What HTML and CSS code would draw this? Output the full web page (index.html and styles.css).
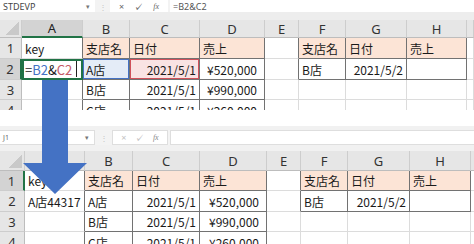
FILE: index.html
```html
<!DOCTYPE html>
<html lang="ja">
<head>
<meta charset="utf-8">
<link rel="stylesheet" href="styles.css">
</head>
<body>
<div class="page">
  <div class="sheet sheet-top">
    <div class="fbar">
      <div class="namebox"><span>STDEVP</span><span class="dd">▾</span></div>
      <div class="sep">⋮</div>
      <div class="fbtns"><span>×</span><span>✓</span><span class="fx">fx</span></div>
      <div class="finput">=B2&amp;C2</div>
    </div>
    <div class="band"></div>
    <div class="grid grid-top">
      <div class="corner"><div class="tri"></div></div>
      <div class="h sel">A</div><div class="h">B</div><div class="h">C</div><div class="h">D</div><div class="h">E</div><div class="h">F</div><div class="h">G</div><div class="h">H</div><div class="h"></div>

      <div class="rh">1</div>
      <div class="c tl">key</div>
      <div class="c t th">支店名</div><div class="c t th">日付</div><div class="c t th">売上</div>
      <div class="c tl"></div>
      <div class="c t th">支店名</div><div class="c t th">日付</div><div class="c t th">売上</div>
      <div class="c"></div>

      <div class="rh sel">2</div>
      <div class="c tl active"><span>=</span><span class="fb">B2</span><span>&amp;</span><span class="fc">C2</span><span class="caret"></span></div>
      <div class="c t refb">A店</div>
      <div class="c t r refc">2021/5/1</div>
      <div class="c t r cur">¥520,000</div>
      <div class="c tl"></div>
      <div class="c t">B店</div><div class="c t r">2021/5/2</div><div class="c t"></div>
      <div class="c"></div>

      <div class="rh">3</div>
      <div class="c tl"></div>
      <div class="c t">B店</div><div class="c t r">2021/5/1</div><div class="c t r cur">¥990,000</div>
      <div class="c"></div><div class="c"></div><div class="c"></div><div class="c"></div><div class="c"></div>

      <div class="rh">4</div>
      <div class="c tl"></div>
      <div class="c t">C店</div><div class="c t r">2021/5/1</div><div class="c t r cur">¥260,000</div>
      <div class="c"></div><div class="c"></div><div class="c"></div><div class="c"></div><div class="c"></div>
    </div>
  </div>

  <div class="sheet sheet-bottom">
    <div class="fbar">
      <div class="namebox"><span>J1</span><span class="dd">▾</span></div>
      <div class="sep">⋮</div>
      <div class="fbtns"><span>×</span><span>✓</span><span class="fx">fx</span></div>
      <div class="finput"></div>
    </div>
    <div class="band"></div>
    <div class="grid grid-bottom">
      <div class="corner"><div class="tri"></div></div>
      <div class="h">A</div><div class="h">B</div><div class="h">C</div><div class="h">D</div><div class="h">E</div><div class="h">F</div><div class="h">G</div><div class="h">H</div><div class="h"></div>

      <div class="rh sel">1</div>
      <div class="c tl">key</div>
      <div class="c t th">支店名</div><div class="c t th">日付</div><div class="c t th">売上</div>
      <div class="c tl"></div>
      <div class="c t th">支店名</div><div class="c t th">日付</div><div class="c t th">売上</div>
      <div class="c"></div>

      <div class="rh">2</div>
      <div class="c tl">A店44317</div>
      <div class="c t">A店</div>
      <div class="c t r">2021/5/1</div>
      <div class="c t r cur">¥520,000</div>
      <div class="c tl"></div>
      <div class="c t">B店</div><div class="c t r">2021/5/2</div><div class="c t"></div>
      <div class="c"></div>

      <div class="rh">3</div>
      <div class="c tl"></div>
      <div class="c t">B店</div><div class="c t r">2021/5/1</div><div class="c t r cur">¥990,000</div>
      <div class="c"></div><div class="c"></div><div class="c"></div><div class="c"></div><div class="c"></div>

      <div class="rh">4</div>
      <div class="c tl"></div>
      <div class="c t">C店</div><div class="c t r">2021/5/1</div><div class="c t r cur">¥260,000</div>
      <div class="c"></div><div class="c"></div><div class="c"></div><div class="c"></div><div class="c"></div>
    </div>
  </div>

  <svg class="arrow" width="474" height="244" viewBox="0 0 474 244">
    <polygon points="42,80 68,80 68,163 87,163 55,194 23,163 42,163" fill="#4472c4"/>
  </svg>
</div>
</body>
</html>
```

FILE: styles.css
```css
* { box-sizing: border-box; }
html, body { margin: 0; padding: 0; background: #fff; }
body { width: 474px; height: 244px; overflow: hidden; font-family: "Noto Sans CJK JP", "Noto Sans", sans-serif; }

.page { position: relative; width: 474px; height: 244px; }

.sheet { overflow: hidden; background: #fff; }
.sheet-top { height: 110px; margin-bottom: 16px; }
.sheet-bottom { height: 118px; background: #f1f1f1; padding-top: 4px; }

/* formula bar */
.fbar { display: flex; background: #f3f3f3; font-family: "Noto Sans", sans-serif; font-size: 9px; color: #444; }
.sheet-top .fbar { height: 12px; }
.sheet-bottom .fbar { height: 15px; }
.namebox { width: 95px; background: #fff; display: flex; align-items: center; justify-content: space-between; padding: 0 5px 0 3px; }
.sheet-bottom .namebox { font-size: 7px; color: #666; border: 1px solid #dedede; border-left: none; }
.dd { font-size: 7px; color: #777; }
.sep { width: 15px; display: flex; align-items: center; justify-content: center; color: #c4c4c4; font-size: 8px; }
.sheet-bottom .sep { width: 17px; }
.fbtns { width: 58px; background: #fff; display: flex; align-items: center; justify-content: space-around; padding: 0 4px; color: #666; font-size: 9px; margin-right: 2px; }
.sheet-bottom .fbtns { width: 56px; color: #c2c2c2; border: 1px solid #dedede; }
.fx { font-family: "Liberation Serif", serif; font-style: italic; font-size: 8px; }
.sheet-bottom .fx { color: #888; }
.finput { flex: 1; background: #fff; display: flex; align-items: center; padding-left: 3px; font-size: 9px; color: #555; }
.sheet-bottom .finput { border: 1px solid #dedede; border-right: none; }

.band { background: #ededed; }
.sheet-top .band { height: 8px; }
.sheet-bottom .band { height: 6px; background: #f1f1f1; }

/* grid */
.grid { display: grid; background: #fff; }
.grid-top { grid-template-columns: 22px 61px 47px 70px 65px 34px 47px 61px 60px 1fr; grid-template-rows: 18px 21px 21px 20px 21px; }
.grid-bottom { grid-template-columns: 25px 60px 48px 67px 67px 34px 47px 62px 61px 1fr; grid-template-rows: 20px 20px 21px 20px 21px; }

.corner { background: #e6e6e6; border-right: 1px solid #cdcdcd; border-bottom: 1px solid #bdbdbd; display: flex; justify-content: flex-end; align-items: flex-end; padding: 0 2px 2px 0; }
.tri { width: 14px; height: 13px; background: linear-gradient(to bottom right, transparent 50%, #c9c9c9 50%); }

.h { background: #e6e6e6; border-right: 1px solid #cdcdcd; border-bottom: 1px solid #bdbdbd; display: flex; align-items: center; justify-content: center; font-family: "Noto Sans", sans-serif; font-size: 13px; color: #333; }
.h.sel { background: #d3d3d3; border-bottom: 2px solid #217346; color: #222; }

.rh { background: #e6e6e6; border-right: 1px solid #bdbdbd; border-bottom: 1px solid #cdcdcd; display: flex; align-items: center; justify-content: center; font-family: "Noto Sans", sans-serif; font-size: 13px; color: #333; }
.rh.sel { background: #d3d3d3; border-right: 2px solid #217346; }

.c { border-right: 1px solid #dcdcdc; border-bottom: 1px solid #dcdcdc; display: flex; align-items: center; padding: 0 3px; font-size: 12px; color: #1a1a1a; white-space: nowrap; overflow: hidden; }
.c.t { border-right-color: #727272; border-bottom-color: #727272; }
.c.tl { border-right-color: #727272; }
.c.th { background: #fce4d6; }
.c.r { justify-content: flex-end; }
.c.cur { padding-right: 7px; }

.c.active { outline: 2px solid #217346; outline-offset: -2px; position: relative; z-index: 1; font-size: 13px; }
.fb { color: #4472c4; }
.fc { color: #c55a67; }
.caret { display: inline-block; width: 1px; height: 16px; background: #222; margin-left: 4px; }

.c.refb { background: #e4ecf7; box-shadow: inset 0 0 0 1px #4472c4; }
.c.refc { background: #f9e3e3; box-shadow: inset 0 0 0 1px #d0505a; }

.arrow { position: absolute; left: 0; top: 0; pointer-events: none; }
```
